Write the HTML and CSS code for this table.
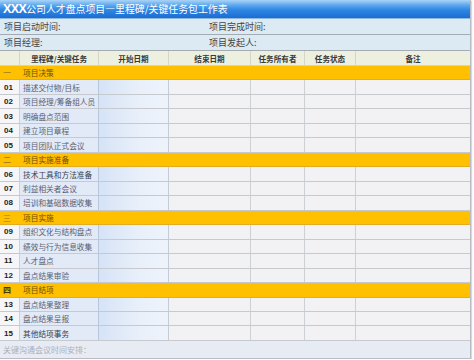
FILE: index.html
```html
<!DOCTYPE html>
<html lang="zh">
<head>
<meta charset="utf-8">
<title>XXX公司人才盘点项目—里程碑/关键任务包工作表</title>
<link rel="stylesheet" href="styles.css">
</head>
<body>
<div class="sheet">
  <div class="title"><span class="xxx">XXX</span>公司人才盘点项目—里程碑/关键任务包工作表</div>
  <div class="info">
    <div class="info-cell">项目启动时间:</div>
    <div class="info-cell">项目完成时间:</div>
  </div>
  <div class="info">
    <div class="info-cell">项目经理:</div>
    <div class="info-cell">项目发起人:</div>
  </div>
  <div class="row head">
    <div class="c"></div>
    <div class="c">里程碑/关键任务</div>
    <div class="c">开始日期</div>
    <div class="c">结束日期</div>
    <div class="c">任务所有者</div>
    <div class="c">任务状态</div>
    <div class="c">备注</div>
  </div>
  <div class="body">
    <div class="row sec"><div class="c n">一</div><div class="c t">项目决策</div><div class="c"></div><div class="c"></div><div class="c"></div><div class="c"></div><div class="c"></div></div>
    <div class="row"><div class="c n">01</div><div class="c t">描述交付物/目标</div><div class="c d"></div><div class="c"></div><div class="c"></div><div class="c"></div><div class="c"></div></div>
    <div class="row"><div class="c n">02</div><div class="c t">项目经理/筹备组人员</div><div class="c d"></div><div class="c"></div><div class="c"></div><div class="c"></div><div class="c"></div></div>
    <div class="row"><div class="c n">03</div><div class="c t">明确盘点范围</div><div class="c d"></div><div class="c"></div><div class="c"></div><div class="c"></div><div class="c"></div></div>
    <div class="row"><div class="c n">04</div><div class="c t">建立项目章程</div><div class="c d"></div><div class="c"></div><div class="c"></div><div class="c"></div><div class="c"></div></div>
    <div class="row"><div class="c n">05</div><div class="c t">项目团队正式会议</div><div class="c d"></div><div class="c"></div><div class="c"></div><div class="c"></div><div class="c"></div></div>
    <div class="row sec"><div class="c n">二</div><div class="c t">项目实施准备</div><div class="c"></div><div class="c"></div><div class="c"></div><div class="c"></div><div class="c"></div></div>
    <div class="row"><div class="c n">06</div><div class="c t dark">技术工具和方法准备</div><div class="c d"></div><div class="c"></div><div class="c"></div><div class="c"></div><div class="c"></div></div>
    <div class="row"><div class="c n">07</div><div class="c t">利益相关者会议</div><div class="c d"></div><div class="c"></div><div class="c"></div><div class="c"></div><div class="c"></div></div>
    <div class="row"><div class="c n">08</div><div class="c t">培训和基础数据收集</div><div class="c d"></div><div class="c"></div><div class="c"></div><div class="c"></div><div class="c"></div></div>
    <div class="row sec"><div class="c n">三</div><div class="c t">项目实施</div><div class="c"></div><div class="c"></div><div class="c"></div><div class="c"></div><div class="c"></div></div>
    <div class="row"><div class="c n">09</div><div class="c t">组织文化与结构盘点</div><div class="c d"></div><div class="c"></div><div class="c"></div><div class="c"></div><div class="c"></div></div>
    <div class="row"><div class="c n">10</div><div class="c t">绩效与行为信息收集</div><div class="c d"></div><div class="c"></div><div class="c"></div><div class="c"></div><div class="c"></div></div>
    <div class="row"><div class="c n">11</div><div class="c t">人才盘点</div><div class="c d"></div><div class="c"></div><div class="c"></div><div class="c"></div><div class="c"></div></div>
    <div class="row"><div class="c n">12</div><div class="c t">盘点结果审验</div><div class="c d"></div><div class="c"></div><div class="c"></div><div class="c"></div><div class="c"></div></div>
    <div class="row sec"><div class="c n strong">四</div><div class="c t">项目结项</div><div class="c"></div><div class="c"></div><div class="c"></div><div class="c"></div><div class="c"></div></div>
    <div class="row"><div class="c n">13</div><div class="c t">盘点结果整理</div><div class="c d"></div><div class="c"></div><div class="c"></div><div class="c"></div><div class="c"></div></div>
    <div class="row"><div class="c n">14</div><div class="c t">盘点结果呈报</div><div class="c d"></div><div class="c"></div><div class="c"></div><div class="c"></div><div class="c"></div></div>
    <div class="row"><div class="c n">15</div><div class="c t dark">其他结项事务</div><div class="c d"></div><div class="c"></div><div class="c"></div><div class="c"></div><div class="c"></div></div>
  </div>
  <div class="foot">关键沟通会议时间安排：</div>
</div>
</body>
</html>
```

FILE: styles.css
```css
html, body {
  margin: 0;
  padding: 0;
  background: #ffffff;
}
body {
  font-family: "Noto Sans CJK SC", "Noto Sans", sans-serif;
  color: #333;
}
.sheet {
  width: 470px;
  height: 358px;
  display: flex;
  flex-direction: column;
  border-right: 1px solid #b9bcc2;
  border-bottom: 1px solid #b9bcc2;
  box-shadow: 1px 1px 1px #d8d8d8;
}
.title {
  height: 19px;
  flex: none;
  display: flex;
  align-items: center;
  padding-left: 3px;
  color: #fff;
  font-size: 9.9px;
  background: linear-gradient(#a9d4f7 0%, #5aa6ee 30%, #2f86e2 55%, #1a6dd4 100%);
  border-bottom: 1px solid #8fb8dc;
  box-sizing: border-box;
}
.xxx {
  font-family: "Liberation Sans", Arial, sans-serif;
  font-weight: bold;
  font-size: 12.5px;
  letter-spacing: -0.6px;
}
.info {
  height: 16px;
  flex: none;
  display: grid;
  grid-template-columns: 205px 1fr;
  background: #dceaf3;
  border-bottom: 1px solid #a4abb3;
  box-sizing: border-box;
  font-size: 9px;
  color: #444;
}
.info-cell {
  display: flex;
  align-items: center;
  padding-left: 4px;
}
.row {
  display: grid;
  grid-template-columns: 20px 79px 70px 82px 54px 51px 114px;
  border-bottom: 1px solid #c6c9ce;
  box-sizing: border-box;
  background: #f2f2f4;
}
.c {
  border-right: 1px solid #cdd0d4;
  display: flex;
  align-items: center;
  overflow: hidden;
  white-space: nowrap;
}
.c:last-child {
  border-right: none;
}
.head {
  height: 15px;
  flex: none;
  background: #eef0df;
  font-size: 7.6px;
  font-weight: bold;
  color: #3a3a3a;
  border-bottom: 1px solid #d4d4c4;
}
.head .c {
  justify-content: center;
  border-right-color: #d6d6c8;
}
.body {
  height: 275px;
  flex: none;
  display: flex;
  flex-direction: column;
}
.body .row {
  flex: 1;
}
.n {
  background: #f6f6f8;
  padding-left: 4px;
  font-family: "Liberation Sans", Arial, sans-serif;
  font-weight: bold;
  font-size: 8px;
  color: #222;
}
.t {
  background: #e2eaf7;
  padding-left: 3px;
  font-size: 7.7px;
  color: #5a6070;
  border-right-color: #b8c6de;
}
.t.dark {
  color: #3a3f4a;
}
.d {
  background: linear-gradient(90deg, #d6e3f6 0%, #e9f0fa 60%, #eef3fb 100%);
  border-right-color: #c3ccd8;
}
.sec {
  background: #ffc000;
  border-bottom-color: #e3ad22;
}
.sec .c {
  border-right-color: #ffc000;
}
.sec .n {
  background: #ffc000;
  font-family: "Noto Sans CJK SC", sans-serif;
  font-weight: normal;
  color: #9a7420;
  padding-left: 3px;
}
.sec .n.strong {
  font-weight: bold;
  color: #4a3400;
}
.sec .t {
  background: #ffc000;
  color: #6e4e00;
}
.foot {
  flex: 1;
  display: flex;
  align-items: center;
  padding-left: 3px;
  background: #e7ebf3;
  font-size: 8px;
  color: #abb0ba;
}
```
